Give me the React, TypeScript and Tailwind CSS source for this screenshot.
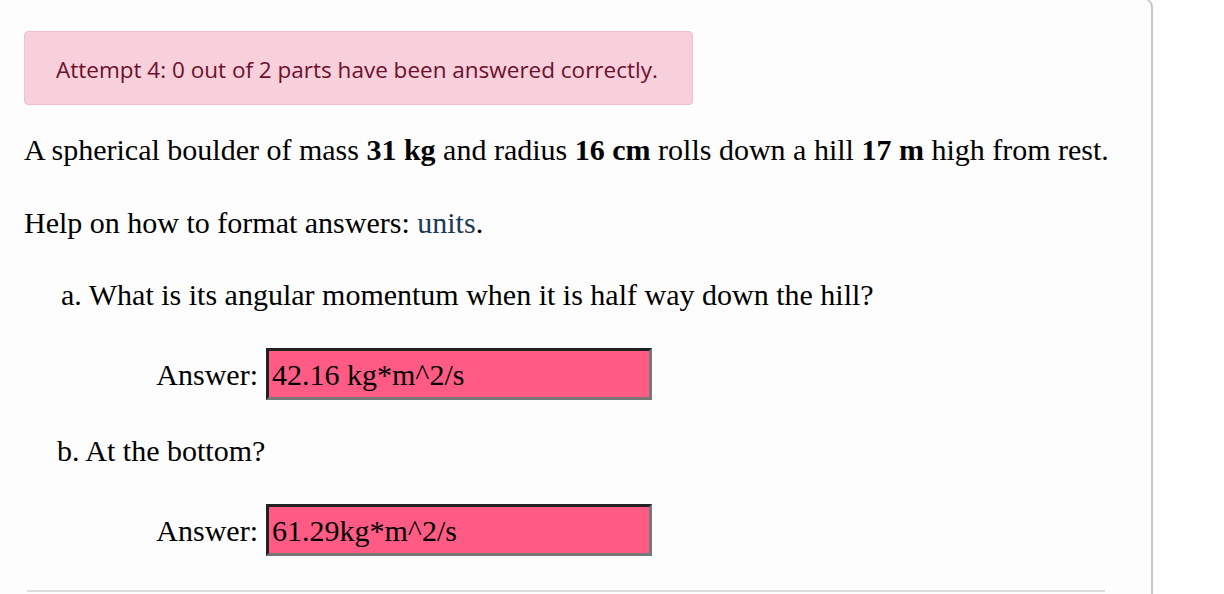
import React from 'react';

const serif = { fontFamily: '"Liberation Serif", "DejaVu Serif", serif' };

const AnswerRow: React.FC<{ value: string }> = ({ value }) => (
  <div className="flex items-center h-[52px]">
    <span className="w-[234px] text-right text-[30px] text-black mr-[8px]">Answer:</span>
    <div className="w-[386px] h-[52px] bg-[#ff5b85] border-[3px] border-t-[#222] border-l-[#222] border-b-[#777] border-r-[#777] flex items-center px-[3px] text-[30px] text-black">
      {value}
    </div>
  </div>
);

export default function App() {
  return (
    <div className="w-[1224px] h-[594px] bg-white overflow-hidden flex">
      <div className="w-[1153px] h-[620px] -mt-px bg-[#fdfdfd] border-r-2 border-t border-[#c4c7ca] rounded-tr-lg pl-[24px] pt-[31px] flex flex-col" style={serif}>
        <div
          className="w-[669px] h-[74px] bg-[#f7d0dc] border border-[#f3bfce] rounded-[4px] flex items-center pl-[31px] pt-[3px] text-[22.5px] text-[#6e0f2b]"
          style={{ fontFamily: '"Open Sans", "Noto Sans", sans-serif' }}
        >
          Attempt 4: 0 out of 2 parts have been answered correctly.
        </div>
        <p className="mt-[25px] text-[30px] text-black leading-[40px]">
          A spherical boulder of mass <b>31 kg</b> and radius <b>16 cm</b> rolls down a hill <b>17 m</b> high from rest.
        </p>
        <p className="mt-[33px] text-[30px] text-black leading-[40px]">
          Help on how to format answers: <span className="text-[#1b3a52]">units</span>.
        </p>
        <div className="mt-[32px] pl-[37px] text-[30px] text-black leading-[40px]">a. What is its angular momentum when it is half way down the hill?</div>
        <div className="mt-[33px]">
          <AnswerRow value="42.16 kg*m^2/s" />
        </div>
        <div className="mt-[31px] pl-[33px] text-[30px] text-black leading-[40px]">b. At the bottom?</div>
        <div className="mt-[33px]">
          <AnswerRow value="61.29kg*m^2/s" />
        </div>
        <div className="mt-[34px] ml-[3px] w-[1078px] h-[2px] bg-[#dcdcdc]" />
      </div>
    </div>
  );
}
